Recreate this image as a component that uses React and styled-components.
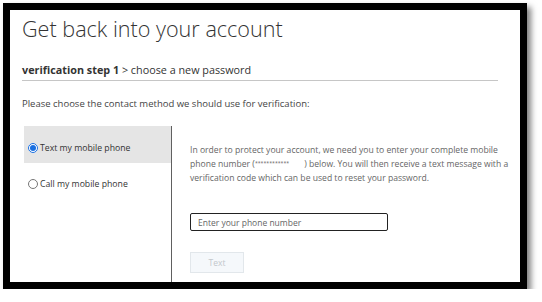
import React from "react";
import styled, { createGlobalStyle } from "styled-components";

const Global = createGlobalStyle`
  html, body { margin: 0; padding: 0; background: #ffffff; }
  body { font-family: "Open Sans", "Noto Sans", Arial, sans-serif; }
  * { box-sizing: border-box; }
`;

const Frame = styled.div`
  margin: 3px 0 0 3px;
  width: 524px;
  height: 286px;
  border: 7px solid #000;
  background: #fff;
  box-shadow: 4px 4px 6px rgba(0, 0, 0, 0.5);
  padding: 0 10px 0 12px;
  display: flex;
  flex-direction: column;
  overflow: hidden;
`;

const Title = styled.h1`
  margin: 4px 0 0 0;
  font-family: "Open Sans", sans-serif;
  font-weight: 300;
  font-size: 21.6px;
  line-height: 30px;
  color: #333;
`;

const Crumbs = styled.div`
  margin: 18px 12px 0 0;
  padding-bottom: 2px;
  border-bottom: 1px solid #c6c6c6;
  font-size: 10.8px;
  line-height: 16px;
  color: #333;
`;

const Strong = styled.b`
  font-weight: 700;
  color: #333;
`;

const Intro = styled.p`
  margin: 17px 0 0 0;
  font-size: 9.5px;
  line-height: 12px;
  color: #444;
`;

const Body = styled.div`
  margin-top: 16px;
  margin-left: 2px;
  flex: 1;
  display: flex;
`;

const Methods = styled.div`
  flex: none;
  width: 148px;
  border-right: 1px solid #606060;
  display: flex;
  flex-direction: column;
`;

const Method = styled.label`
  height: 37px;
  display: flex;
  align-items: center;
  gap: 2px;
  padding-left: 4px;
  padding-top: ${(p) => (p.$first ? "6px" : "4px")};
  background: ${(p) => (p.$active ? "#e5e5e5" : "transparent")};
  font-size: 8.7px;
  color: #333;
  cursor: pointer;
`;

const Radio = styled.input`
  margin: 0;
  width: 10px;
  height: 10px;
  accent-color: #1a6fe0;
`;

const Detail = styled.div`
  flex: 1;
  min-width: 0;
  padding: 17px 0 0 18px;
  display: flex;
  flex-direction: column;
  align-items: flex-start;
`;

const Para = styled.p`
  margin: 0;
  width: 326px;
  flex: none;
  font-size: 8.6px;
  line-height: 14px;
  color: #666;
`;

const Masked = styled.span`
  font-size: 5.2px;
  line-height: 1;
  vertical-align: 2px;
  margin-right: 15px;
`;

const PhoneInput = styled.input`
  margin-top: 28px;
  width: 198px;
  height: 18px;
  border: 1px solid #222;
  border-radius: 2px;
  padding: 0 7px;
  font-family: "Open Sans", sans-serif;
  font-size: 8.5px;
  color: #333;
  outline: none;
  &::placeholder { color: #666; }
`;

const SendButton = styled.button`
  margin-top: 21px;
  width: 54px;
  height: 21px;
  background: #f5f8fb;
  border: 1px solid #e2e7eb;
  color: #c3c7cb;
  font-family: "Open Sans", sans-serif;
  font-size: 8.5px;
  padding: 0;
`;

export default function App() {
  return (
    <>
      <Global />
      <Frame>
        <Title>Get back into your account</Title>
        <Crumbs>
          <Strong>verification step 1</Strong> &gt; choose a new password
        </Crumbs>
        <Intro>Please choose the contact method we should use for verification:</Intro>
        <Body>
          <Methods>
            <Method $active $first>
              <Radio type="radio" name="m" defaultChecked />
              Text my mobile phone
            </Method>
            <Method>
              <Radio type="radio" name="m" />
              Call my mobile phone
            </Method>
          </Methods>
          <Detail>
            <Para>
              In order to protect your account, we need you to enter your complete mobile
              phone number (<Masked>************</Masked>) below. You will then receive a text message with a
              verification code which can be used to reset your password.
            </Para>
            <PhoneInput placeholder="Enter your phone number" />
            <SendButton disabled>Text</SendButton>
          </Detail>
        </Body>
      </Frame>
    </>
  );
}
